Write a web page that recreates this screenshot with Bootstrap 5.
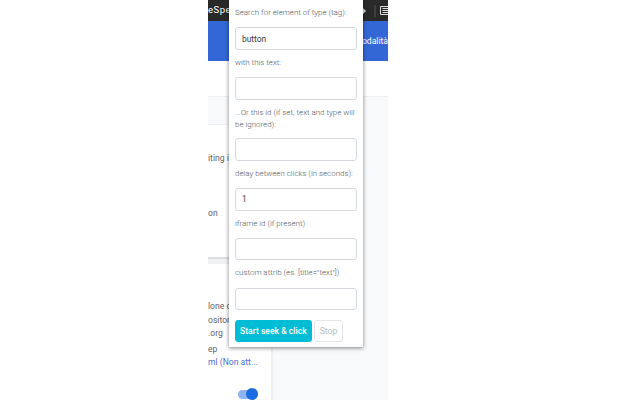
<!DOCTYPE html>
<html lang="en"><head><meta charset="utf-8"><title>Seek and click</title>
<link href="https://cdn.jsdelivr.net/npm/bootstrap@5.3.0/dist/css/bootstrap.min.css" rel="stylesheet">
<style>
html,body{height:400px;overflow:hidden;background:#fff}
body{font-family:Roboto,"Liberation Sans",sans-serif;position:relative}
.pagecol{width:180px;height:400px;margin-left:208px;overflow:hidden}
.topdark{height:21px;background:#292929;color:#fff;font-size:9.5px;letter-spacing:.5px}
.topdark svg{flex:none}
.topblue{height:40px;background:#3367d6;color:#fff;font-size:8.6px}
.gap-white{height:35px}
.mainrow{height:304px;border-top:1px solid #eceef0}
.leftpane{width:65px;border-right:2px solid #eef0f2;font-size:8.6px;color:#5f6368;white-space:nowrap;overflow:hidden}
.rightpane{background:#f8f9fa}
.leftband{height:28px;background:#f8f9fa;border-bottom:1px solid #f0f1f2}
.snip{height:13.5px;line-height:13.5px}
.bluetxt{color:#4a6fd0}
.snip-iting{margin-top:27px}
.snip-on{margin-top:41px}
.graybar{height:7px;background:#f1f2f3;border-top:2px solid #dcdfe2;margin-top:37px}
.snip-done{margin-top:36px}
.snip-ep{margin-top:2px}
.switchy{width:20px;height:9px;border-radius:5px;background:#8fb3ee;position:relative;margin:20px 0 0 30px}
.switchy::after{content:"";position:absolute;right:0;top:-1.5px;width:12px;height:12px;border-radius:50%;background:#1a6be0}
.popup{position:absolute;left:229px;top:-1px;width:134px;height:348px;background:#fff;box-shadow:0 1px 4px rgba(0,0,0,.5);padding:1px 6px 0}
.lbl{display:block;font-size:7.95px;font-weight:300;line-height:12.4px;color:#50575d;margin:7px 0 8px}
.lbl-two{margin-bottom:6.5px}
.popup .form-control{height:22.5px;min-height:0;padding:0 6px;font-size:8.4px;color:#343a40;border-radius:3px;border-color:#d5d9dd;box-shadow:none}
.actions{margin-top:10px;gap:2px}
.btn-seek{background:#00bcd4;border:1px solid #00bcd4;color:#fff;font-size:8.6px;font-weight:500;padding:0 4px;height:22px;line-height:20px;border-radius:3px;white-space:nowrap}
.popup .btn-halt,.popup .btn-halt:disabled{background:#fff;border:1px solid #e3e6e9;color:#b5bbc1;font-size:8.6px;padding:0 5px;height:22px;line-height:20px;border-radius:3px;opacity:1}
</style></head>
<body>
<div class="pagecol d-flex flex-column">
  <div class="topdark d-flex align-items-center justify-content-between">
    <span>eSpe</span>
    <span class="d-flex align-items-center">
      <svg width="6" height="8" viewBox="0 0 6 8"><path d="M0 3h3V1l3 3-3 3V5H0z" fill="#ddd"/></svg>
      <svg class="ms-2" width="2" height="12" viewBox="0 0 2 12"><path d="M1 0v12" stroke="#555"/></svg>
      <svg class="ms-1" width="8" height="11" viewBox="0 0 8 11"><path d="M.5 1.5h8v8h-8zM2.5 3.5h6M2.5 5.5h6M2.5 7.5h6" stroke="#ddd" fill="none"/></svg>
    </span>
  </div>
  <div class="topblue d-flex align-items-center justify-content-end"><span>odalità</span></div>
  <div class="gap-white"></div>
  <div class="mainrow d-flex">
    <div class="leftpane">
      <div class="leftband"></div>
      <div class="snip snip-iting">iting <span class="bluetxt">i</span></div>
      <div class="snip snip-on">on</div>
      <div class="graybar"></div>
      <div class="snip snip-done">lone c</div>
      <div class="snip">ository</div>
      <div class="snip">.org</div>
      <div class="snip snip-ep">ep</div>
      <div class="snip bluetxt">ml (Non att...</div>
      <div class="switchy"></div>
    </div>
    <div class="rightpane flex-grow-1"></div>
  </div>
</div>
<form class="popup">
  <label class="lbl">Search for element of type (tag):</label>
  <input class="form-control" value="button">
  <label class="lbl">with this text:</label>
  <input class="form-control">
  <label class="lbl lbl-two">...Or this id (if set, text and type will be ignored):</label>
  <input class="form-control">
  <label class="lbl">delay between clicks (in seconds):</label>
  <input class="form-control" value="1">
  <label class="lbl">iframe id (if present)</label>
  <input class="form-control">
  <label class="lbl">custom attrib (es. [title="text"])</label>
  <input class="form-control">
  <div class="actions d-flex">
    <button type="button" class="btn btn-seek">Start seek &amp; click</button>
    <button type="button" class="btn btn-halt" disabled>Stop</button>
  </div>
</form>
</body></html>
